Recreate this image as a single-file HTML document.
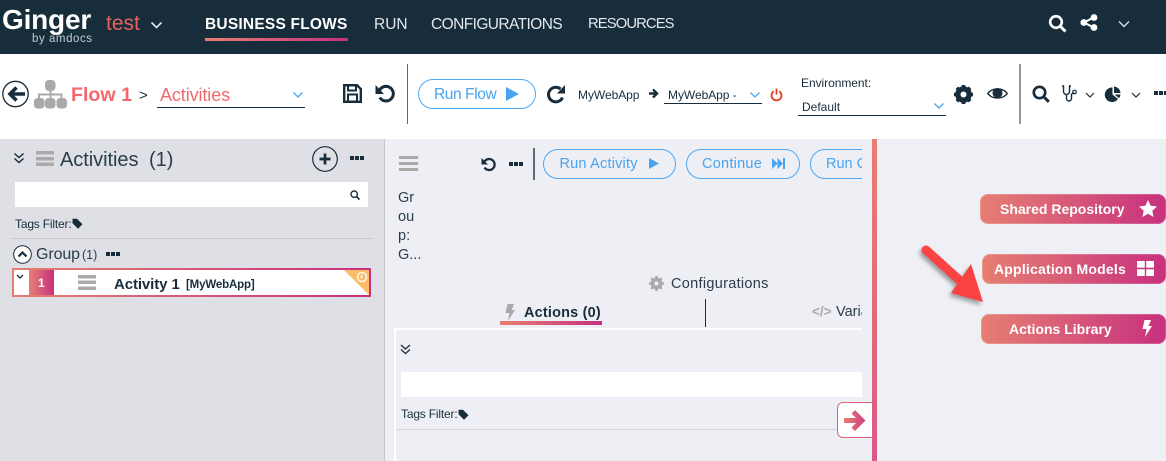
<!DOCTYPE html>
<html><head><meta charset="utf-8"><style>
html,body{margin:0;padding:0;width:1166px;height:461px;overflow:hidden;background:#eef0f5}
body{position:relative;font-family:"Liberation Sans",sans-serif;color:#182d3b}
.a,.t{position:absolute}
.t{white-space:nowrap;line-height:1}
svg{position:absolute;overflow:visible}
.g{background:linear-gradient(90deg,#e67f72,#c7307f)}
.pill{position:absolute;box-sizing:border-box;height:30px;border:1px solid #4aa8f5;border-radius:15px;background:transparent}
.blue{color:#4aa3f0}
.side{position:absolute;height:30px;border-radius:8px;box-shadow:inset 0 0 0 1px rgba(255,255,255,.18)}
.side .t{color:#fff;font-weight:bold;font-size:14px;top:8px}
.bars{position:absolute;width:18px;height:15px;background:linear-gradient(#aaa 0 3.5px,transparent 3.5px 5.75px,#aaa 5.75px 9.25px,transparent 9.25px 11.5px,#aaa 11.5px 15px)}
.dots{position:absolute;width:14px;height:4px;background:linear-gradient(90deg,#182d3b 0 4px,transparent 4px 5px) 0 0/5px 4px repeat-x}
</style></head><body>
<!-- header -->
<div class="a" style="left:0;top:0;width:1166px;height:54px;background:#182d3b"></div>
<div class="t" style="left:2px;top:6px;font-size:28px;font-weight:bold;color:#fff;letter-spacing:-.2px">Ginger</div>
<div class="t" style="left:32px;top:34px;font-size:11.5px;color:#c3cbd0;letter-spacing:.55px">by amdocs</div>
<div class="t" style="left:106px;top:13px;font-size:21px;color:#e8605f">test</div>
<svg style="left:150px;top:21px" width="13" height="8" viewBox="0 0 13 8"><path d="M1.500 1.500L6.500 6.500L11.500 1.500" fill="none" stroke="#dfe8ee" stroke-width="1.600"/></svg>
<div class="t" style="left:205px;top:16.500px;font-size:15.500px;font-weight:bold;color:#fff;letter-spacing:.22px">BUSINESS FLOWS</div>
<div class="a g" style="left:205px;top:38px;width:143px;height:2.500px"></div>
<div class="t" style="left:374px;top:16.500px;font-size:15.500px;color:#e3e8ec">RUN</div>
<div class="t" style="left:431px;top:16.500px;font-size:15.500px;color:#e3e8ec;letter-spacing:-.58px">CONFIGURATIONS</div>
<div class="t" style="left:588px;top:17px;font-size:14.800px;color:#e3e8ec;letter-spacing:-.9px">RESOURCES</div>
<svg style="left:1048px;top:14px" width="19" height="19" viewBox="0 0 19 19"><circle cx="8" cy="8" r="5.800" fill="none" stroke="#fff" stroke-width="2.600"/><path d="M12.500 12.500L17.500 17.500" stroke="#fff" stroke-width="3"/></svg>
<svg style="left:1080px;top:14px" width="18" height="17" viewBox="0 0 18 17"><path d="M13.500 3.500L4 8.500L13.500 13.500" fill="none" stroke="#fff" stroke-width="2"/><circle cx="14" cy="3.500" r="3.400" fill="#fff"/><circle cx="3.800" cy="8.500" r="3.400" fill="#fff"/><circle cx="14" cy="13.500" r="3.400" fill="#fff"/></svg>
<svg style="left:1118px;top:20px" width="12" height="8" viewBox="0 0 12 8"><path d="M1 1.500L6 6.500L11 1.500" fill="none" stroke="#dfe8ee" stroke-width="1.300"/></svg>
<!-- toolbar -->
<div class="a" style="left:0;top:54px;width:1166px;height:85px;background:#fff"></div>
<svg style="left:2px;top:80px" width="27" height="28" viewBox="0 0 27 28"><circle cx="13.500" cy="14" r="12.700" fill="#fff" stroke="#182d3b" stroke-width="1.300"/><path d="M23 14H9M14.500 7.500L8 14L14.500 20.500" fill="none" stroke="#182d3b" stroke-width="3.600"/></svg>
<svg style="left:34px;top:80px" width="33" height="29" viewBox="0 0 33 29" fill="#a9a9a9"><rect x="11" y="0" width="10.500" height="11" rx="4"/><rect x="0" y="18" width="10.500" height="10.500" rx="3.500"/><rect x="11" y="18" width="10.500" height="10.500" rx="3.500"/><rect x="22.500" y="18" width="10.500" height="10.500" rx="3.500"/><path d="M15.500 9h2v4.500H28.500V19h-2V15.500H17.500V19h-2V15.500H6V19H4V13.500H15.500z"/></svg>
<div class="t" style="left:71px;top:85.500px;font-size:19.600px;font-weight:bold;color:#f2686c">Flow 1</div>
<div class="t" style="left:139px;top:88px;font-size:15px;color:#182d3b">&gt;</div>
<div class="t" style="left:160px;top:86px;font-size:18px;color:#f2686c;letter-spacing:-.1px">Activities</div>
<div class="a" style="left:157px;top:107px;width:148px;height:1px;background:#182d3b"></div>
<svg style="left:292px;top:91px" width="12" height="8" viewBox="0 0 12 8"><path d="M1.500 1.500L6 6L10.500 1.500" fill="none" stroke="#4aa8f5" stroke-width="1.400"/></svg>
<svg style="left:343px;top:84px" width="19" height="19" viewBox="0 0 19 19"><path d="M1.200 1.200H14L17.800 5V17.800H1.200Z" fill="none" stroke="#182d3b" stroke-width="2.400"/><path d="M5 1.500H13V6.500H5Z" fill="none" stroke="#182d3b" stroke-width="2"/><rect x="5" y="10.500" width="9" height="7" fill="none" stroke="#182d3b" stroke-width="2"/></svg>
<svg style="left:375px;top:84px" width="20" height="19" viewBox="0 0 20 19"><path d="M4.200 7A7.300 7.300 0 1 1 4.800 13.500" fill="none" stroke="#182d3b" stroke-width="3"/><path d="M.5 1V10H9Z" fill="#182d3b"/></svg>
<div class="a" style="left:407px;top:64px;width:1px;height:60px;background:#5c6a74"></div>
<div class="pill" style="left:418px;top:79px;width:118px"></div>
<div class="t blue" style="left:434px;top:87px;font-size:15.500px;letter-spacing:-.4px">Run Flow</div>
<svg style="left:506px;top:87px" width="13" height="14" viewBox="0 0 13 14"><path d="M0 0L13 7L0 14Z" fill="#4aa3f0"/></svg>
<svg style="left:547px;top:84px" width="19" height="20" viewBox="0 0 19 20"><path d="M15.500 13.500A7.300 7.300 0 1 1 13.500 5" fill="none" stroke="#182d3b" stroke-width="3"/><path d="M18 1V9.500H10Z" fill="#182d3b"/></svg>
<div class="t" style="left:578px;top:88.500px;font-size:12px;letter-spacing:-.05px">MyWebApp</div>
<svg style="left:648px;top:88px" width="11" height="11" viewBox="0 0 11 11"><path d="M1 5.500H8.500M5 1.500L9 5.500L5 9.500" fill="none" stroke="#182d3b" stroke-width="2.400"/></svg>
<div class="t" style="left:668px;top:88.500px;font-size:12px;letter-spacing:-.05px">MyWebApp -</div>
<div class="a" style="left:664px;top:103px;width:98px;height:1px;background:#182d3b"></div>
<svg style="left:749px;top:91px" width="12" height="8" viewBox="0 0 12 8"><path d="M1.500 1.500L6 6L10.500 1.500" fill="none" stroke="#4aa8f5" stroke-width="1.300"/></svg>
<svg style="left:770px;top:88px" width="13" height="14" viewBox="0 0 13 14"><path d="M3.800 3.200A5 5 0 1 0 9.200 3.200M6.500 .5V6.500" fill="none" stroke="#e2401f" stroke-width="1.800"/></svg>
<div class="t" style="left:801px;top:77px;font-size:12px;letter-spacing:-.05px">Environment:</div>
<div class="t" style="left:802px;top:101px;font-size:12px">Default</div>
<div class="a" style="left:798px;top:115px;width:148px;height:1px;background:#182d3b"></div>
<svg style="left:933px;top:102px" width="12" height="8" viewBox="0 0 12 8"><path d="M1.500 1.500L6 6L10.500 1.500" fill="none" stroke="#4aa8f5" stroke-width="1.400"/></svg>
<svg style="left:954px;top:85px" width="19" height="19" viewBox="0 0 19 19"><circle cx="9.500" cy="9.500" r="6" fill="none" stroke="#182d3b" stroke-width="4.600"/><path d="M9.500 0V19M0 9.500H19M2.800 2.800L16.200 16.200M16.200 2.800L2.800 16.200" stroke="#182d3b" stroke-width="3.600"/><circle cx="9.500" cy="9.500" r="3" fill="#fff"/></svg>
<svg style="left:987px;top:86px" width="21" height="15" viewBox="0 0 21 15"><path d="M.8 7.500C5 1.500 16 1.500 20.200 7.500C16 13.500 5 13.500 .8 7.500Z" fill="none" stroke="#182d3b" stroke-width="1.500"/><circle cx="10.500" cy="7" r="5" fill="#182d3b"/></svg>
<div class="a" style="left:1019px;top:64px;width:2px;height:60px;background:#8e979e"></div>
<svg style="left:1032px;top:85px" width="18" height="18" viewBox="0 0 18 18"><circle cx="7.500" cy="7.500" r="5.700" fill="none" stroke="#182d3b" stroke-width="2.700"/><path d="M11.500 11.500L16.800 16.800" stroke="#182d3b" stroke-width="3"/></svg>
<svg style="left:1061px;top:85px" width="16" height="17" viewBox="0 0 16 17"><path d="M1 1H2.500V6.500A3 3 0 0 0 8.500 6.500V1H10M5.500 9.500V13.500A2.500 2.500 0 0 0 10.500 13.500V9.500A2 2 0 0 1 14 9" fill="none" stroke="#182d3b" stroke-width="1.400"/><circle cx="13.500" cy="7" r="1.800" fill="none" stroke="#182d3b" stroke-width="1.200"/></svg>
<svg style="left:1085px;top:92px" width="10" height="7" viewBox="0 0 10 7"><path d="M1 1L5 5L9 1" fill="none" stroke="#182d3b" stroke-width="1.200"/></svg>
<svg style="left:1105px;top:86px" width="16" height="16" viewBox="0 0 16 16"><path d="M7.500 1.500V8.500L13 13A7.300 7.300 0 1 1 7.500 1.500Z" fill="#182d3b"/><path d="M9 .5A7 7 0 0 1 15.500 7H9Z" fill="#182d3b"/><path d="M9.500 8.500H15.500A7 7 0 0 1 14 12.300Z" fill="#182d3b"/></svg>
<svg style="left:1131px;top:92px" width="10" height="7" viewBox="0 0 10 7"><path d="M1 1L5 5L9 1" fill="none" stroke="#182d3b" stroke-width="1.200"/></svg>
<div class="dots" style="left:1154px;top:91px"></div>
<!-- left panel -->
<div class="a" style="left:0;top:139px;width:384px;height:322px;background:#dfe0e6"></div>
<div class="a" style="left:384px;top:139px;width:1px;height:322px;background:#c6c8cd"></div>
<svg style="left:13px;top:152px" width="12" height="13" viewBox="0 0 12 13"><path d="M1.500 1.500L6 5.500L10.500 1.500M1.500 6.500L6 10.500L10.500 6.500" fill="none" stroke="#182d3b" stroke-width="1.500"/></svg>
<div class="bars" style="left:36px;top:151px"></div>
<div class="t" style="left:60px;top:150px;font-size:20px;color:#2a3d4a;letter-spacing:-.05px">Activities</div>
<div class="t" style="left:149px;top:150px;font-size:20px;color:#2a3d4a">(1)</div>
<svg style="left:312px;top:146px" width="26" height="26" viewBox="0 0 26 26"><circle cx="13" cy="13" r="12.300" fill="none" stroke="#182d3b" stroke-width="1.200"/><path d="M13 7.500V18.500M7.500 13H18.500" stroke="#182d3b" stroke-width="2.700"/></svg>
<div class="dots" style="left:350px;top:156px"></div>
<div class="a" style="left:15px;top:182px;width:353px;height:25px;background:#fff"></div>
<svg style="left:350px;top:190px" width="10" height="10" viewBox="0 0 10 10"><circle cx="4.200" cy="4.200" r="3.200" fill="none" stroke="#182d3b" stroke-width="1.400"/><path d="M6.500 6.500L9.500 9.500" stroke="#182d3b" stroke-width="1.600"/></svg>
<div class="t" style="left:15px;top:218px;font-size:12px;letter-spacing:-.18px">Tags Filter:</div>
<svg style="left:72px;top:218px" width="11" height="11" viewBox="0 0 11 11"><path d="M.5 .8H5L10.500 6.300L6 10.800L.5 5.300Z" fill="#182d3b"/></svg>
<div class="a" style="left:10px;top:238px;width:363px;height:1px;background:#c9cacf"></div>
<svg style="left:13px;top:245px" width="19" height="19" viewBox="0 0 19 19"><circle cx="9.500" cy="9.500" r="8.800" fill="#fff" stroke="#182d3b" stroke-width="1"/><path d="M5.500 11.500L9.500 7.500L13.500 11.500" fill="none" stroke="#182d3b" stroke-width="2.200"/></svg>
<div class="t" style="left:36px;top:246.500px;font-size:16px;color:#2a3d4a;letter-spacing:-.1px">Group</div>
<div class="t" style="left:82px;top:248.500px;font-size:12.500px;color:#2a3d4a">(1)</div>
<div class="dots" style="left:106px;top:252px"></div>
<div class="a g" style="left:12px;top:268px;width:359px;height:29px"></div>
<div class="a" style="left:14px;top:270px;width:355px;height:25px;background:#fff"></div>
<div class="a g" style="left:29px;top:270px;width:25px;height:25px"></div>
<div class="t" style="left:38px;top:277px;font-size:12px;font-weight:bold;color:#fff">1</div>
<svg style="left:16px;top:274px" width="8" height="5" viewBox="0 0 8 5"><path d="M1 1L4 4L7 1" fill="none" stroke="#182d3b" stroke-width="1.300"/></svg>
<div class="bars" style="left:78px;top:275px"></div>
<div class="t" style="left:114px;top:276.500px;font-size:15px;font-weight:bold;letter-spacing:-.1px">Activity 1</div>
<div class="t" style="left:186px;top:279.500px;font-size:11.500px;font-weight:bold;letter-spacing:-.15px">[MyWebApp]</div>
<svg style="left:344px;top:270px" width="25" height="25" viewBox="0 0 25 25"><path d="M0 0H25V25Z" fill="#fbbd68"/><circle cx="18" cy="7" r="4.500" fill="none" stroke="#fff" stroke-width="1.300"/><path d="M18 4.500V7.300H15.500" fill="none" stroke="#fff"/></svg>
<!-- middle -->
<div class="a" style="left:385px;top:139px;width:487px;height:322px;background:#eeeff4"></div>
<div class="bars" style="left:399px;top:156px;width:19px;height:15px;background:linear-gradient(#aaa 0 3px,transparent 3px 6px,#aaa 6px 9px,transparent 9px 12px,#aaa 12px 15px)"></div>
<svg style="left:481px;top:157px" width="15" height="15" viewBox="0 0 15 15"><path d="M3 5.500A5.500 5.500 0 1 1 3.500 10.500" fill="none" stroke="#182d3b" stroke-width="2.300"/><path d="M.5 1V7.500H7Z" fill="#182d3b"/></svg>
<div class="dots" style="left:509px;top:162px"></div>
<div class="a" style="left:533px;top:148px;width:1.500px;height:32px;background:#5c6a74"></div>
<div class="pill" style="left:543px;top:149px;width:133px"></div>
<div class="t blue" style="left:559.500px;top:157px;font-size:14.500px;letter-spacing:.2px">Run Activity</div>
<svg style="left:649px;top:158px" width="10" height="11" viewBox="0 0 10 11"><path d="M0 0L10 5.500L0 11Z" fill="#4aa3f0"/></svg>
<div class="pill" style="left:686px;top:149px;width:114px"></div>
<div class="t blue" style="left:702px;top:157px;font-size:14.500px;letter-spacing:.25px">Continue</div>
<svg style="left:772px;top:158px" width="13" height="11" viewBox="0 0 13 11"><path d="M0 0L5.500 5.500L0 11ZM5.500 0L11 5.500L5.500 11Z" fill="#4aa3f0"/><rect x="11" y="0" width="2" height="11" fill="#4aa3f0"/></svg>
<div class="a" style="left:810px;top:149px;width:52px;height:30px;overflow:hidden"><div style="position:absolute;left:0;top:0;box-sizing:border-box;width:120px;height:30px;border:1px solid #4aa8f5;border-radius:15px"></div><div class="t blue" style="left:16px;top:8px;font-size:14.500px">Run C</div></div>
<div class="t" style="left:398px;top:189px;font-size:14.500px;color:#2a3d4a;line-height:19px;white-space:normal;width:26px">Gr<br>ou<br>p:<br>G...</div>
<svg style="left:649px;top:276px" width="15" height="15" viewBox="0 0 15 15"><circle cx="7.500" cy="7.500" r="4.200" fill="none" stroke="#a9a9a9" stroke-width="3.400"/><path d="M7.500 0V15M0 7.500H15M2.200 2.200L12.800 12.800M12.800 2.200L2.200 12.800" stroke="#a9a9a9" stroke-width="2.400"/><circle cx="7.500" cy="7.500" r="2" fill="#eeeff4"/></svg>
<div class="t" style="left:671px;top:277px;font-size:14.500px;color:#2a3d4a;letter-spacing:.3px">Configurations</div>
<svg style="left:505px;top:304px" width="10" height="17" viewBox="0 0 10 17"><path d="M2.500 0H9L6.500 6H10L3 17L4.500 9H0.500Z" fill="#a9a9a9"/></svg>
<div class="t" style="left:524px;top:305.500px;font-size:14.500px;font-weight:bold;letter-spacing:.18px">Actions (0)</div>
<div class="a g" style="left:499.500px;top:321px;width:102px;height:3.500px"></div>
<div class="a" style="left:705px;top:299px;width:1px;height:28px;background:#182d3b"></div>
<div class="t" style="left:812px;top:305px;font-size:13.500px;font-weight:bold;color:#a9a9a9">&lt;/&gt;</div>
<div class="a" style="left:836px;top:304px;width:26px;height:18px;overflow:hidden"><div class="t" style="left:0;top:1px;font-size:14.500px;color:#2a3d4a">Variables</div></div>
<div class="a" style="left:394px;top:328px;width:468px;height:2px;background:#fff"></div>
<div class="a" style="left:394px;top:328px;width:2px;height:133px;background:#fff"></div>
<svg style="left:400px;top:344px" width="11" height="11" viewBox="0 0 11 11"><path d="M1 1L5.500 5L10 1M1 5.500L5.500 9.500L10 5.500" fill="none" stroke="#182d3b" stroke-width="1.300"/></svg>
<div class="a" style="left:401px;top:372px;width:461px;height:25px;background:#fff"></div>
<div class="t" style="left:401px;top:408px;font-size:12px;letter-spacing:-.18px">Tags Filter:</div>
<svg style="left:458px;top:409px" width="11" height="11" viewBox="0 0 11 11"><path d="M.5 .8H5L10.500 6.300L6 10.800L.5 5.300Z" fill="#182d3b"/></svg>
<div class="a" style="left:396px;top:429px;width:476px;height:1px;background:#d4d5da"></div>
<!-- divider -->
<div class="a" style="left:872px;top:139px;width:5px;height:322px;background:linear-gradient(180deg,#e67f72,#da5a84)"></div>
<div class="a" style="left:837px;top:402px;width:35px;height:36px;box-sizing:border-box;background:#fff;border:1.500px solid #e0667f;border-right:none;border-radius:6px 0 0 6px"></div>
<svg style="left:844px;top:410px" width="23" height="21" viewBox="0 0 23 21"><defs><linearGradient id="ar"><stop offset="0" stop-color="#e67f72"/><stop offset="1" stop-color="#cf3f80"/></linearGradient></defs><path d="M0 8H12L7.500 3.500L11 0L21.500 10.500L11 21L7.500 17.500L12 13H0Z" fill="url(#ar)"/></svg>
<!-- right -->
<div class="side g" style="left:980px;top:194px;width:186px">
<div class="t" style="left:20px">Shared Repository</div>
<svg style="left:159px;top:6px" width="18" height="17" viewBox="0 0 18 17"><path d="M9 0L11.700 5.800L18 6.500L13.300 10.800L14.600 17L9 13.800L3.400 17L4.700 10.800L0 6.500L6.300 5.800Z" fill="#fff"/></svg>
</div>
<div class="side g" style="left:982px;top:254px;width:184px">
<div class="t" style="left:12px;letter-spacing:.2px">Application Models</div>
<svg style="left:155px;top:7px" width="17" height="15" viewBox="0 0 17 15" fill="#fff"><rect x="0" y="0" width="7.800" height="6.700"/><rect x="9.200" y="0" width="7.800" height="6.700"/><rect x="0" y="8.300" width="7.800" height="6.700"/><rect x="9.200" y="8.300" width="7.800" height="6.700"/></svg>
</div>
<div class="side g" style="left:981px;top:314px;width:185px">
<div class="t" style="left:28px">Actions Library</div>
<svg style="left:161px;top:6px" width="10" height="17" viewBox="0 0 10 17"><path d="M2.500 0H9L6.500 6H10L3 17L4.500 9H0.500Z" fill="#fff"/></svg>
</div>
<svg style="left:915px;top:240px;filter:drop-shadow(-2px 3px 2px rgba(0,0,0,.35))" width="75" height="68" viewBox="0 0 75 68"><path d="M11 10L52 47" stroke="#fb4343" stroke-width="9" stroke-linecap="round"/><path d="M36 53L56 24L68 62Z" fill="#fb4343"/></svg>
</body></html>
